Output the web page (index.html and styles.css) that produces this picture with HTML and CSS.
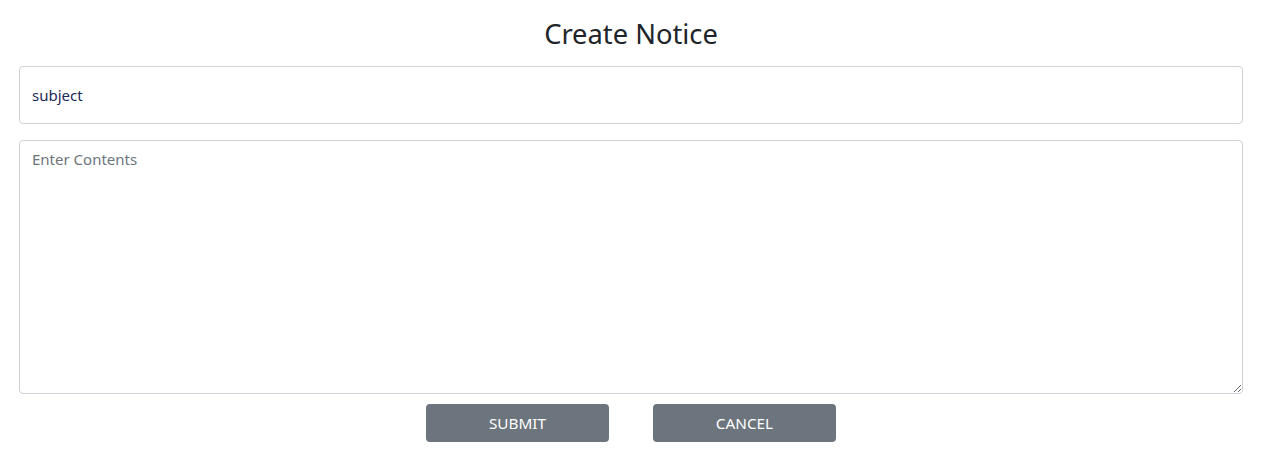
FILE: index.html
```html
<!DOCTYPE html>
<html lang="en">
<head>
<meta charset="utf-8">
<title>Create Notice</title>
<link rel="stylesheet" href="styles.css">
</head>
<body>
<main class="page">
  <h2 class="title">Create Notice</h2>
  <form class="form">
    <input class="field" type="text" value="subject">
    <textarea class="field area" placeholder="Enter Contents"></textarea>
    <div class="actions">
      <button type="button" class="btn">SUBMIT</button>
      <button type="button" class="btn">CANCEL</button>
    </div>
  </form>
</main>
</body>
</html>
```
FILE: styles.css
```css
* { box-sizing: border-box; }
body {
  margin: 0;
  background: #fff;
  font-family: "Noto Sans", "Open Sans", sans-serif;
  color: #212529;
}
.page {
  width: 1224px;
  margin-left: 19px;
  padding-top: 13px;
}
.title {
  margin: 0 0 11px;
  text-align: center;
  font-weight: 400;
  font-size: 27.3px;
  line-height: 42px;
  color: #212529;
}
.form {
  display: flex;
  flex-direction: column;
}
.field {
  display: block;
  width: 100%;
  border: 1px solid #ced4da;
  border-radius: 4px;
  padding: 0 12px;
  font-family: inherit;
  font-size: 15px;
  color: #1c2a5a;
  background: #fff;
  height: 58px;
  outline: none;
}
.area {
  margin-top: 16px;
  height: 254px;
  padding: 6px 12px;
  line-height: 24px;
  resize: vertical;
}
.area::placeholder { color: #6c757d; }
.actions {
  display: flex;
  justify-content: center;
  gap: 44px;
  margin-top: 10px;
}
.btn {
  width: 183px;
  height: 38px;
  border: 0;
  border-radius: 4px;
  background: #6c757d;
  color: #fff;
  font-family: inherit;
  font-size: 15.3px;
}
```
